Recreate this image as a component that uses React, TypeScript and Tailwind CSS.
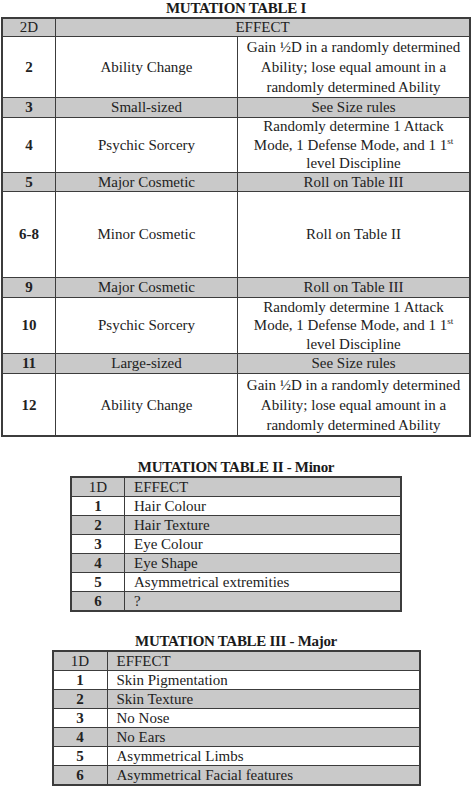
const FONT = { fontFamily: '"Liberation Serif", "Times New Roman", serif' };

type MainRow = { roll: string; name: string; effect: React.ReactNode; h: string; shade: boolean; lh: string };

const SORCERY = (
  <>
    Randomly determine 1 Attack
    <br />
    Mode, 1 Defense Mode, and 1 1<span className="relative -top-[6px] text-[9px] leading-none">st</span>
    <br />
    level Discipline
  </>
);

const ABILITY = (
  <>
    Gain ½D in a randomly determined
    <br />
    Ability; lose equal amount in a
    <br />
    randomly determined Ability
  </>
);

const TABLE_ONE: MainRow[] = [
  { roll: "2", name: "Ability Change", effect: ABILITY, h: "h-[61px]", shade: false, lh: "leading-[20px]" },
  { roll: "3", name: "Small-sized", effect: "See Size rules", h: "h-[20px]", shade: true, lh: "leading-[19px]" },
  { roll: "4", name: "Psychic Sorcery", effect: SORCERY, h: "h-[55px]", shade: false, lh: "leading-[18.5px]" },
  { roll: "5", name: "Major Cosmetic", effect: "Roll on Table III", h: "h-[19px]", shade: true, lh: "leading-[18px]" },
  { roll: "6-8", name: "Minor Cosmetic", effect: "Roll on Table II", h: "h-[86px]", shade: false, lh: "leading-[19px]" },
  { roll: "9", name: "Major Cosmetic", effect: "Roll on Table III", h: "h-[20px]", shade: true, lh: "leading-[19px]" },
  { roll: "10", name: "Psychic Sorcery", effect: SORCERY, h: "h-[56px]", shade: false, lh: "leading-[18.5px]" },
  { roll: "11", name: "Large-sized", effect: "See Size rules", h: "h-[20px]", shade: true, lh: "leading-[19px]" },
  { roll: "12", name: "Ability Change", effect: ABILITY, h: "h-[62px]", shade: false, lh: "leading-[20px]" },
];

const MINOR = ["Hair Colour", "Hair Texture", "Eye Colour", "Eye Shape", "Asymmetrical extremities", "?"];
const MAJOR = [
  "Skin Pigmentation",
  "Skin Texture",
  "No Nose",
  "No Ears",
  "Asymmetrical Limbs",
  "Asymmetrical Facial features",
];

function SmallTable({ title, rows, width, col }: { title: string; rows: string[]; width: string; col: string }) {
  return (
    <div className="flex flex-col items-center">
      <h2 className="text-[15px] font-bold leading-[17px] text-[#1a1a1a] tracking-[-0.3px]">{title}</h2>
      <div className={`${width} flex flex-col border-2 border-[#3c3c3c] text-[15px] leading-[18px] text-[#222]`}>
        <div className="flex h-[18px] items-center bg-[#c9c9c9]">
          <div className={`${col} shrink-0 text-center`}>1D</div>
          <div className="flex h-full flex-1 items-center border-l border-[#3c3c3c] pl-[9px]">EFFECT</div>
        </div>
        {rows.map((r, i) => (
          <div
            key={r}
            className={`flex h-[19px] items-center border-t border-[#3c3c3c] ${i % 2 === 1 ? "bg-[#c9c9c9]" : "bg-white"}`}
          >
            <div className={`${col} shrink-0 text-center font-bold`}>{i + 1}</div>
            <div className="flex h-full flex-1 items-center border-l border-[#3c3c3c] pl-[9px]">{r}</div>
          </div>
        ))}
      </div>
    </div>
  );
}

export default function App() {
  return (
    <div className="h-[792px] w-[474px] overflow-hidden bg-white" style={FONT}>
      <div className="flex flex-col items-center pl-px pr-[3px]">
        <h1 className="text-[15px] font-bold leading-[17px] text-[#1a1a1a] tracking-[-0.3px]">MUTATION TABLE I</h1>
        <div className="flex w-[470px] flex-col border-2 border-[#3c3c3c] text-[15px] text-[#222]">
          <div className="flex h-[17px] items-center bg-[#c9c9c9] leading-[17px]">
            <div className="w-[52px] shrink-0 text-center">2D</div>
            <div className="flex h-full flex-1 items-center justify-center border-l border-[#3c3c3c]">EFFECT</div>
          </div>
          {TABLE_ONE.map((r, i) => (
            <div
              key={i}
              className={`flex ${r.h} items-stretch border-t border-[#3c3c3c] ${r.lh} ${r.shade ? "bg-[#c9c9c9]" : "bg-white"}`}
            >
              <div className="flex w-[52px] shrink-0 items-center justify-center font-bold">{r.roll}</div>
              <div className="flex w-[182px] shrink-0 items-center justify-center border-l border-[#3c3c3c]">
                {r.name}
              </div>
              <div className="flex flex-1 items-center justify-center border-l border-[#3c3c3c] text-center">
                <div>{r.effect}</div>
              </div>
            </div>
          ))}
        </div>
      </div>

      <div className="mt-[22px] pr-[2px]">
        <SmallTable title="MUTATION TABLE II - Minor" rows={MINOR} width="w-[332px]" col="w-[52px]" />
      </div>
      <div className="mt-[21px] pr-[2px]">
        <SmallTable title="MUTATION TABLE III - Major" rows={MAJOR} width="w-[369px]" col="w-[53px]" />
      </div>
    </div>
  );
}
